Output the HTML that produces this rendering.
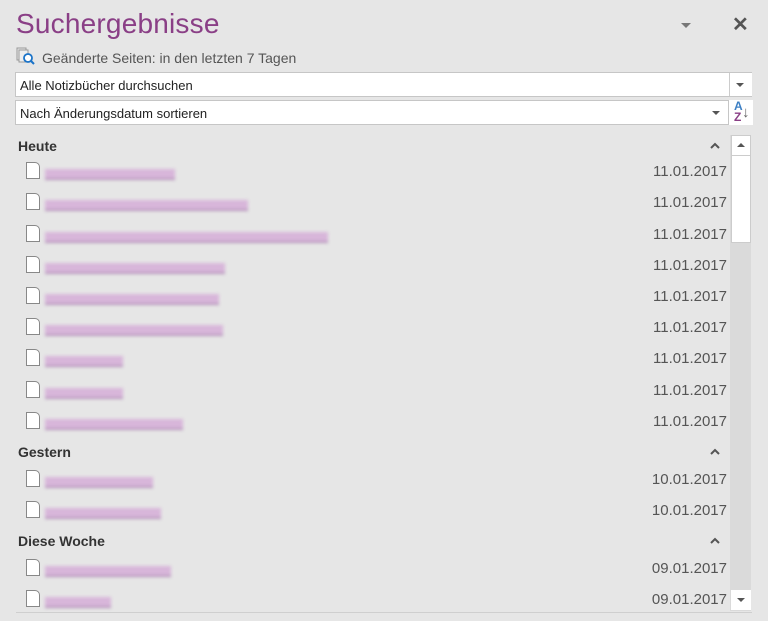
<!DOCTYPE html>
<html><head><meta charset="utf-8"><style>
body{margin:0;width:768px;height:621px;background:#e6e6e6;font-family:"Liberation Sans",sans-serif;position:relative;overflow:hidden;color:#444}
.a{position:absolute}
.title{left:16px;top:8px;font-size:28px;color:#8a3f86;letter-spacing:0.2px}
.sub{left:42px;top:50px;font-size:14px;color:#555}
.dd{background:#fff;border:1px solid #c6c6c6;box-sizing:border-box;font-size:13px;color:#222;padding:5px 0 0 4px}
.btn{background:#fff;border-left:1px solid #ccc}
.tri{width:0;height:0;border-left:4px solid transparent;border-right:4px solid transparent;border-top:4px solid #555}
.h{left:18px;font-size:14px;font-weight:bold;color:#333}
.pg{left:26px;width:14px;height:17px;border:1px solid #888;background:#fff;box-sizing:border-box;border-radius:0 5px 0 0}
.ln{left:45px;height:9px;background:#d8b6da;filter:blur(1.5px);border-bottom:2px solid #b896bd}
.dt{right:41px;font-size:15px;color:#555}
.car{left:709px}
</style></head><body>
<div class="a title">Suchergebnisse</div>
<div class="a tri" style="left:681px;top:23px;border-top-color:#777;border-left-width:5px;border-right-width:5px;border-top-width:5px"></div>
<div class="a" style="left:732px;top:12px;font-size:20px;color:#555;font-weight:bold">✕</div>
<svg class="a" style="left:16px;top:47px" width="22" height="20" viewBox="0 0 22 20"><rect x="1" y="1" width="9" height="12" fill="none" stroke="#999"/><rect x="3" y="3" width="9" height="12" fill="#eee" stroke="#999"/><circle cx="12" cy="11" r="4" fill="#fff" stroke="#1a73c8" stroke-width="1.8"/><line x1="15" y1="14" x2="18" y2="17" stroke="#1a73c8" stroke-width="2"/></svg>
<div class="a sub">Geänderte Seiten: in den letzten 7 Tagen</div>
<div class="a dd" style="left:15px;top:72px;width:737px;height:25px">Alle Notizbücher durchsuchen</div>
<div class="a btn" style="left:729px;top:73px;width:22px;height:23px"></div>
<div class="a tri" style="left:736px;top:83px"></div>
<div class="a dd" style="left:15px;top:100px;width:714px;height:25px">Nach Änderungsdatum sortieren</div>
<div class="a tri" style="left:712px;top:111px"></div>
<div class="a" style="left:729px;top:100px;width:24px;height:25px;background:#fff"></div>
<div class="a" style="left:734px;top:101px;font-size:12px;font-weight:bold;color:#3c7fc4;line-height:11px">A<br><span style="color:#8a3f86">Z</span></div>
<div class="a" style="left:742px;top:104px;font-size:15px;color:#666">↓</div>
<div class="a" style="left:730px;top:135px;width:21px;height:476px;background:#dadada"></div>
<div class="a" style="left:731px;top:135px;width:20px;height:108px;background:#fff;border:1px solid #ccc;box-sizing:border-box"></div>
<div class="a" style="left:731px;top:155px;width:20px;height:1px;background:#ccc"></div>
<div class="a tri" style="left:737px;top:143px;border-top:none;border-bottom:4px solid #555"></div>
<div class="a" style="left:731px;top:590px;width:20px;height:20px;background:#fff"></div>
<div class="a tri" style="left:737px;top:598px"></div>
<div class="a" style="left:16px;top:612px;width:736px;height:1px;background:#cfcfcf"></div>

<div class="a h" style="top:138px">Heute</div>
<svg class="a car" style="top:142px" width="12" height="8"><path d="M2 6 L6 2 L10 6" fill="none" stroke="#555" stroke-width="2"/></svg>
<div class="a h" style="top:444px">Gestern</div>
<svg class="a car" style="top:448px" width="12" height="8"><path d="M2 6 L6 2 L10 6" fill="none" stroke="#555" stroke-width="2"/></svg>
<div class="a h" style="top:533px">Diese Woche</div>
<svg class="a car" style="top:537px" width="12" height="8"><path d="M2 6 L6 2 L10 6" fill="none" stroke="#555" stroke-width="2"/></svg>

<div class="a pg" style="top:162px"></div><div class="a ln" style="top:169px;width:130px"></div><div class="a dt" style="top:163px">11.01.2017</div>
<div class="a pg" style="top:193px"></div><div class="a ln" style="top:200px;width:203px"></div><div class="a dt" style="top:194px">11.01.2017</div>
<div class="a pg" style="top:225px"></div><div class="a ln" style="top:232px;width:283px"></div><div class="a dt" style="top:226px">11.01.2017</div>
<div class="a pg" style="top:256px"></div><div class="a ln" style="top:263px;width:180px"></div><div class="a dt" style="top:257px">11.01.2017</div>
<div class="a pg" style="top:287px"></div><div class="a ln" style="top:294px;width:174px"></div><div class="a dt" style="top:288px">11.01.2017</div>
<div class="a pg" style="top:318px"></div><div class="a ln" style="top:325px;width:178px"></div><div class="a dt" style="top:319px">11.01.2017</div>
<div class="a pg" style="top:349px"></div><div class="a ln" style="top:356px;width:78px"></div><div class="a dt" style="top:350px">11.01.2017</div>
<div class="a pg" style="top:381px"></div><div class="a ln" style="top:388px;width:78px"></div><div class="a dt" style="top:382px">11.01.2017</div>
<div class="a pg" style="top:412px"></div><div class="a ln" style="top:419px;width:138px"></div><div class="a dt" style="top:413px">11.01.2017</div>
<div class="a pg" style="top:470px"></div><div class="a ln" style="top:477px;width:108px"></div><div class="a dt" style="top:471px">10.01.2017</div>
<div class="a pg" style="top:501px"></div><div class="a ln" style="top:508px;width:116px"></div><div class="a dt" style="top:502px">10.01.2017</div>
<div class="a pg" style="top:559px"></div><div class="a ln" style="top:566px;width:126px"></div><div class="a dt" style="top:560px">09.01.2017</div>
<div class="a pg" style="top:590px"></div><div class="a ln" style="top:597px;width:66px"></div><div class="a dt" style="top:591px">09.01.2017</div>
</body></html>
